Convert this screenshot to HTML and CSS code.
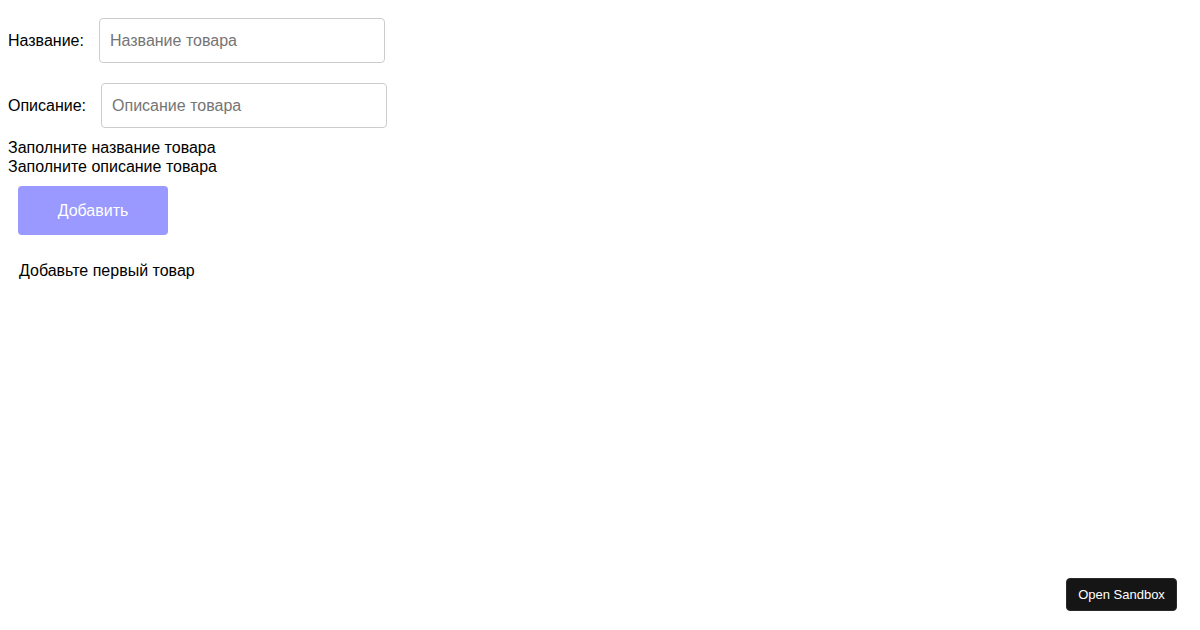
FILE: index.html
```html
<!DOCTYPE html>
<html lang="ru">
<head>
<meta charset="utf-8">
<link rel="stylesheet" href="styles.css">
</head>
<body>
<form class="form">
  <div class="row">
    <label class="label">Название:</label>
    <input class="input" type="text" placeholder="Название товара">
  </div>
  <div class="row">
    <label class="label">Описание:</label>
    <input class="input" type="text" placeholder="Описание товара">
  </div>
  <div class="errors">
    <div>Заполните название товара</div>
    <div>Заполните описание товара</div>
  </div>
  <button class="add" type="button">Добавить</button>
</form>
<p class="empty">Добавьте первый товар</p>
<a class="sandbox">Open Sandbox</a>
</body>
</html>
```
FILE: styles.css
```css
html, body {
  margin: 0;
  padding: 0;
  background: #fff;
}
body {
  padding: 8px;
  font-family: "Liberation Sans", Arial, sans-serif;
  font-size: 16px;
  color: #000;
}
.form {
  margin: 0;
}
.row {
  display: flex;
  align-items: center;
  margin: 10px 0 20px;
}
.row + .row {
  margin-top: 0;
  margin-bottom: 10px;
}
.label {
  margin-right: 15px;
}
.input {
  box-sizing: border-box;
  width: 286px;
  height: 45px;
  padding: 0 10px;
  border: 1px solid #ccc;
  border-radius: 4px;
  font-family: "Liberation Sans", Arial, sans-serif;
  font-size: 16px;
  color: #000;
  outline: none;
}
.input::placeholder {
  color: #757575;
}
.errors {
  line-height: 19px;
}
.add {
  display: block;
  box-sizing: border-box;
  width: 150px;
  height: 49px;
  margin: 10px 0 0 10px;
  border: none;
  border-radius: 4px;
  background: #9999ff;
  color: #fff;
  font-family: "Liberation Sans", Arial, sans-serif;
  font-size: 16px;
}
.empty {
  margin: 26px 0 0 11px;
  line-height: 19px;
}
.sandbox {
  position: fixed;
  right: 23px;
  bottom: 19px;
  box-sizing: border-box;
  width: 111px;
  height: 33px;
  display: flex;
  align-items: center;
  justify-content: center;
  background: #151515;
  color: #fff;
  border-radius: 4px;
  font-size: 13px;
  border: 1px solid #2a2a2a;
}
```
